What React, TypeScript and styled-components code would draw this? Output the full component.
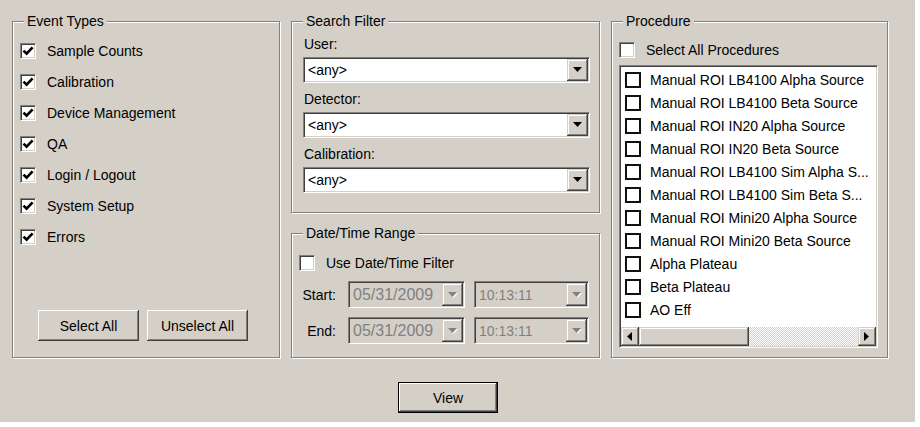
import React from 'react';
import styled, { createGlobalStyle, css } from 'styled-components';

const GlobalStyle = createGlobalStyle`
  html, body {
    margin: 0;
    padding: 0;
    background: #ffffff;
  }
  body {
    font-family: 'Liberation Sans', Arial, sans-serif;
    font-size: 14px;
    color: #000;
  }
`;

const raised = css`
  background: #d4d0c8;
  box-shadow: inset -1px -1px #404040, inset 1px 1px #d4d0c8, inset -2px -2px #808080, inset 2px 2px #ffffff;
`;

const sunken = css`
  border: 1px solid;
  border-color: #808080 #ffffff #ffffff #808080;
  box-shadow: inset 1px 1px #404040, inset -1px -1px #d4d0c8;
`;

const Window = styled.div`
  width: 915px;
  height: 422px;
  box-sizing: border-box;
  background: #d4d0c8;
  padding: 13px 0 0 12px;
  display: grid;
  grid-template-columns: 268px 309px 277px;
  grid-template-rows: 345px auto;
  column-gap: 11px;
  row-gap: 24px;
`;

const Group = styled.fieldset`
  margin: 0;
  min-width: 0;
  box-sizing: border-box;
  padding: 0;
  border: 1px solid #808080;
  box-shadow: inset 1px 1px #ffffff, 1px 1px #ffffff;
  display: flex;
  flex-direction: column;
`;

const Legend = styled.legend`
  margin-left: 11px;
  padding: 0 3px;
  line-height: 16px;
  font-size: 14px;
  background: #d4d0c8;
`;

const GroupBody = styled.div<{ $pad: string }>`
  flex: 1;
  display: flex;
  flex-direction: column;
  padding: ${(p) => p.$pad};
  min-height: 0;
`;

const Column = styled.div`
  display: flex;
  flex-direction: column;
  gap: 12px;
`;

const CheckRow = styled.label<{ $h: number }>`
  display: flex;
  align-items: center;
  gap: 11px;
  height: ${(p) => p.$h}px;
  white-space: nowrap;
  flex: none;
`;

const Box = styled.span<{ $flat?: boolean }>`
  flex: none;
  width: 16px;
  height: 16px;
  box-sizing: border-box;
  background: #fff;
  display: inline-flex;
  align-items: center;
  justify-content: center;
  ${(p) =>
    p.$flat
      ? css`
          border: 2px solid #111;
        `
      : sunken}
`;

const ButtonRow = styled.div`
  margin-top: auto;
  display: flex;
  gap: 8px;
  padding-left: 18px;
`;

const Button = styled.button<{ $default?: boolean }>`
  width: ${(p) => (p.$default ? 100 : 101)}px;
  height: 31px;
  padding: 0;
  font-family: 'Liberation Sans', Arial, sans-serif;
  font-size: 14px;
  color: #000;
  background: #d4d0c8;
  border: ${(p) => (p.$default ? '1px solid #000' : 'none')};
  box-shadow: inset -1px -1px #404040, inset 1px 1px #ffffff, inset -2px -2px #808080, inset 2px 2px #d4d0c8;
`;

const FieldLabel = styled.div`
  line-height: 16px;
  margin-bottom: 5px;
  padding-left: 1px;
`;

const FieldBlock = styled.div`
  margin-bottom: 8px;
  &:last-child {
    margin-bottom: 0;
  }
`;

const Combo = styled.div<{ $disabled?: boolean; $w?: number; $fs?: number }>`
  ${sunken}
  width: ${(p) => (p.$w ? `${p.$w}px` : 'auto')};
  height: ${(p) => (p.$disabled ? 27 : 26)}px;
  box-sizing: border-box;
  padding: 1px;
  display: flex;
  align-items: stretch;
  background: ${(p) => (p.$disabled ? '#d4d0c8' : '#ffffff')};
  color: ${(p) => (p.$disabled ? '#808080' : '#000')};
  font-size: ${(p) => p.$fs ?? 14}px;
  flex: none;
`;

const ComboText = styled.span`
  flex: 1;
  display: flex;
  align-items: center;
  padding-left: 3px;
  white-space: nowrap;
  overflow: hidden;
`;

const DropButton = styled.span`
  ${raised}
  width: 21px;
  flex: none;
  display: flex;
  align-items: center;
  justify-content: center;
`;

const DateRow = styled.div`
  display: flex;
  align-items: center;
  margin-top: 8px;
  & + & {
    margin-top: 9px;
  }
`;

const RowLabel = styled.span`
  width: 37px;
  text-align: right;
  margin-right: 12px;
`;

const Gap = styled.span`
  width: 9px;
  flex: none;
`;

const ListBox = styled.div`
  ${sunken}
  margin-top: 5px;
  flex: 1;
  padding: 1px;
  background: #fff;
  display: flex;
  flex-direction: column;
  overflow: hidden;
`;

const Items = styled.div`
  flex: 1;
  padding-top: 1px;
`;

const Item = styled.div`
  height: 23px;
  display: flex;
  align-items: center;
  gap: 9px;
  padding-left: 4px;
  white-space: nowrap;
`;

const HScroll = styled.div`
  height: 19px;
  display: flex;
  flex: none;
`;

const ScrollButton = styled.span`
  ${raised}
  width: 18px;
  display: flex;
  align-items: center;
  justify-content: center;
`;

const Thumb = styled.span`
  ${raised}
  width: 110px;
`;

const Track = styled.span`
  flex: 1;
  background-color: #ffffff;
  background-image: conic-gradient(#d4d0c8 25%, #ffffff 0 50%, #d4d0c8 0 75%, #ffffff 0);
  background-size: 2px 2px;
`;

const Footer = styled.div`
  grid-column: 1 / -1;
  display: flex;
  justify-content: center;
  padding-right: 4px;
`;

const CheckMark = () => (
  <svg width="12" height="12" viewBox="0 0 12 12">
    <path d="M1.5 5.6 L4.6 8.6 L10.6 2.4" fill="none" stroke="#000" strokeWidth="2.7" />
  </svg>
);

const Arrow: React.FC<{ dir: 'down' | 'left' | 'right'; disabled?: boolean }> = ({ dir, disabled }) => {
  const pts =
    dir === 'down' ? '0,0 9,0 4.5,5' : dir === 'left' ? '5,0 5,9 0,4.5' : '0,0 0,9 5,4.5';
  const w = dir === 'down' ? 10 : 6;
  const h = dir === 'down' ? 6 : 10;
  return (
    <svg width={w} height={h} viewBox={`0 0 ${w} ${h}`}>
      {disabled && <polygon points={pts} fill="#ffffff" transform="translate(1 1)" />}
      <polygon points={pts} fill={disabled ? '#808080' : '#000'} />
    </svg>
  );
};

const eventTypes = [
  'Sample Counts',
  'Calibration',
  'Device Management',
  'QA',
  'Login / Logout',
  'System Setup',
  'Errors',
];

const filters = ['User:', 'Detector:', 'Calibration:'];

const procedures = [
  'Manual ROI LB4100 Alpha Source',
  'Manual ROI LB4100 Beta Source',
  'Manual ROI IN20 Alpha Source',
  'Manual ROI IN20 Beta Source',
  'Manual ROI LB4100 Sim Alpha S...',
  'Manual ROI LB4100 Sim Beta S...',
  'Manual ROI Mini20 Alpha Source',
  'Manual ROI Mini20 Beta Source',
  'Alpha Plateau',
  'Beta Plateau',
  'AO Eff',
];

const DateTimeRow: React.FC<{ label: string }> = ({ label }) => (
  <DateRow>
    <RowLabel>{label}</RowLabel>
    <Combo $disabled $w={117} $fs={16}>
      <ComboText>05/31/2009</ComboText>
      <DropButton>
        <Arrow dir="down" disabled />
      </DropButton>
    </Combo>
    <Gap />
    <Combo $disabled $w={115}>
      <ComboText>10:13:11</ComboText>
      <DropButton>
        <Arrow dir="down" disabled />
      </DropButton>
    </Combo>
  </DateRow>
);

const App: React.FC = () => {
  return (
    <>
      <GlobalStyle />
      <Window>
        <Group>
          <Legend>Event Types</Legend>
          <GroupBody $pad="6px 0 16px 7px">
            {eventTypes.map((name) => (
              <CheckRow key={name} $h={31}>
                <Box>
                  <CheckMark />
                </Box>
                {name}
              </CheckRow>
            ))}
            <ButtonRow>
              <Button>Select All</Button>
              <Button>Unselect All</Button>
            </ButtonRow>
          </GroupBody>
        </Group>

        <Column>
          <Group style={{ height: 200 }}>
            <Legend>Search Filter</Legend>
            <GroupBody $pad="7px 9px 0 11px">
              {filters.map((f) => (
                <FieldBlock key={f}>
                  <FieldLabel>{f}</FieldLabel>
                  <Combo>
                    <ComboText>&lt;any&gt;</ComboText>
                    <DropButton>
                      <Arrow dir="down" />
                    </DropButton>
                  </Combo>
                </FieldBlock>
              ))}
            </GroupBody>
          </Group>
          <Group style={{ flex: 1 }}>
            <Legend>Date/Time Range</Legend>
            <GroupBody $pad="12px 9px 0 7px">
              <CheckRow $h={20}>
                <Box />
                Use Date/Time Filter
              </CheckRow>
              <DateTimeRow label="Start:" />
              <DateTimeRow label="End:" />
            </GroupBody>
          </Group>
        </Column>

        <Group>
          <Legend>Procedure</Legend>
          <GroupBody $pad="11px 9px 9px 7px">
            <CheckRow $h={20}>
              <Box />
              Select All Procedures
            </CheckRow>
            <ListBox>
              <Items>
                {procedures.map((p) => (
                  <Item key={p}>
                    <Box $flat />
                    {p}
                  </Item>
                ))}
              </Items>
              <HScroll>
                <ScrollButton>
                  <Arrow dir="left" />
                </ScrollButton>
                <Thumb />
                <Track />
                <ScrollButton>
                  <Arrow dir="right" />
                </ScrollButton>
              </HScroll>
            </ListBox>
          </GroupBody>
        </Group>

        <Footer>
          <Button $default>View</Button>
        </Footer>
      </Window>
    </>
  );
};

export default App;
